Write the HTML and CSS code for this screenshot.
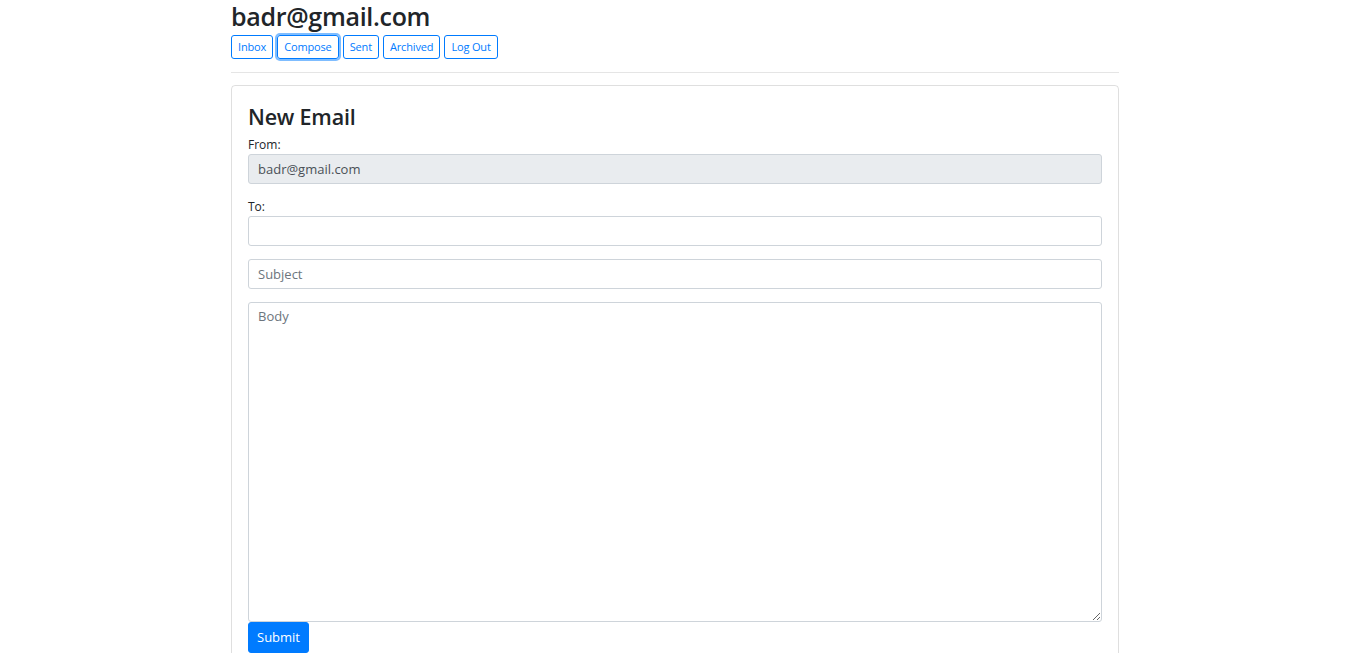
FILE: index.html
```html
<!DOCTYPE html>
<html>
<head>
<meta charset="utf-8">
<link rel="stylesheet" href="styles.css">
</head>
<body>
<div class="container">
  <h3 class="user">badr@gmail.com</h3>
  <div class="nav">
    <button class="btn btn-outline">Inbox</button>
    <button class="btn btn-outline focus">Compose</button>
    <button class="btn btn-outline">Sent</button>
    <button class="btn btn-outline">Archived</button>
    <button class="btn btn-outline">Log Out</button>
  </div>
  <hr class="rule">
  <div class="card">
    <h4 class="title">New Email</h4>
    <form class="form">
      <div class="group">
        <label class="label">From:</label>
        <input class="control" disabled value="badr@gmail.com">
      </div>
      <div class="group">
        <label class="label">To:</label>
        <input class="control">
      </div>
      <div class="group">
        <input class="control" placeholder="Subject">
      </div>
      <textarea class="control area" placeholder="Body"></textarea>
      <button type="button" class="btn btn-primary">Submit</button>
    </form>
  </div>
</div>
</body>
</html>
```
FILE: styles.css
```css
* { box-sizing: border-box; }
html, body { margin: 0; padding: 0; background: #fff; }
body {
  font-family: "Open Sans", "Noto Sans", sans-serif;
  color: #212529;
  font-size: 13px;
  line-height: 1.5;
}
.container {
  width: 888px;
  margin: 0 0 0 231px;
}
.user {
  margin: 0;
  font-size: 25px;
  font-weight: 600;
  line-height: 33px;
  letter-spacing: -0.3px;
}
.nav {
  display: flex;
  gap: 3px;
  margin-top: 2px;
}
.btn {
  font-family: inherit;
  display: inline-block;
  border: 1px solid #007bff;
  border-radius: 3px;
  background: transparent;
  cursor: pointer;
}
.btn-outline {
  color: #007bff;
  font-size: 11px;
  line-height: 16px;
  padding: 3px 6px;
  height: 24px;
  letter-spacing: -0.15px;
}
.btn-outline + .btn-outline { margin-left: 1px; }
.focus { box-shadow: 0 0 0 2px rgba(0,123,255,.5); }
.rule {
  border: 0;
  border-top: 1px solid rgba(0,0,0,.1);
  margin: 13px 0 12px;
}
.card {
  border: 1px solid rgba(0,0,0,.125);
  border-radius: 4px;
  padding: 16px 16px 0;
  height: 600px;
}
.title {
  margin: 0 0 4px;
  font-size: 21.5px;
  font-weight: 600;
  line-height: 29px;
  letter-spacing: -0.2px;
}
.form { display: flex; flex-direction: column; }
.group { display: flex; flex-direction: column; margin-bottom: 13px; }
.label { font-size: 12px; line-height: 19px; }
.control {
  font-family: inherit;
  font-size: 13px;
  line-height: 19px;
  height: 30px;
  padding: 4px 9px;
  border: 1px solid #ced4da;
  border-radius: 3px;
  color: #495057;
  background: #fff;
  width: 100%;
}
.control::placeholder { color: #6c757d; }
.control:disabled { background: #e9ecef; color: #495057; }
.area { height: 320px; resize: vertical; }
.btn-primary {
  align-self: flex-start;
  background: #007bff;
  color: #fff;
  font-size: 13px;
  line-height: 19px;
  padding: 5px 8px;
  height: 31px;
}
```
